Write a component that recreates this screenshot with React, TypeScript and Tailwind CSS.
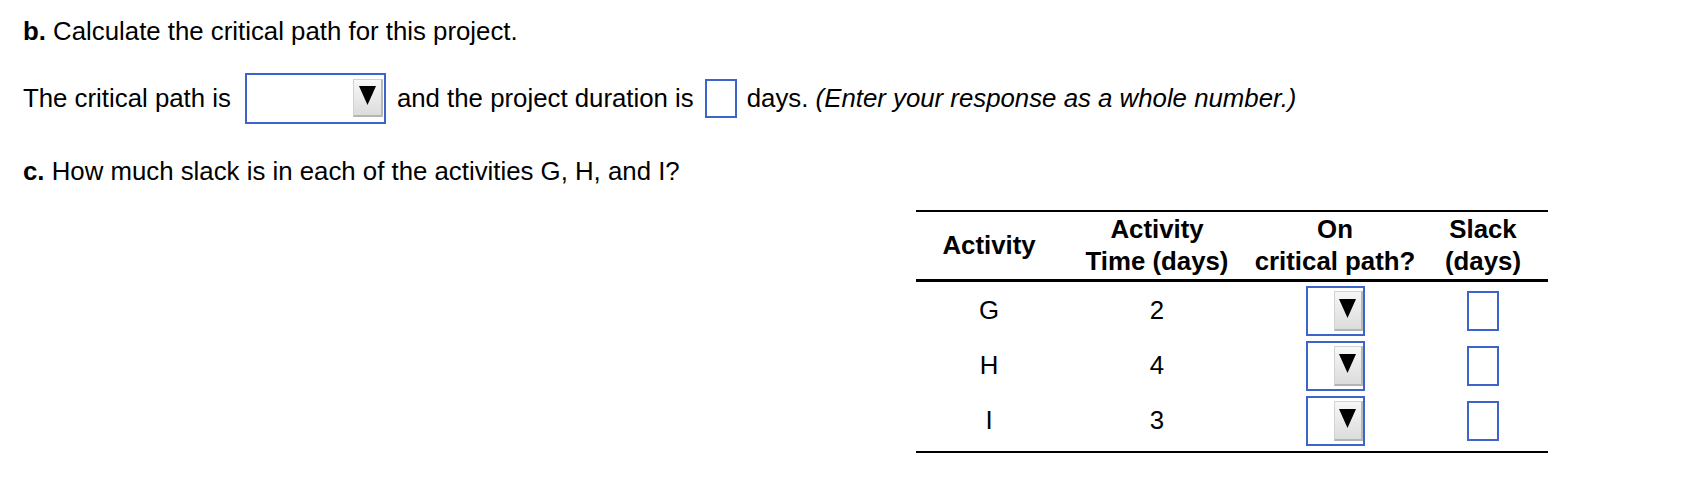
import React from 'react';

const BLUE = 'border-[#3d64c8]';

const Arrow: React.FC<{ className?: string }> = ({ className }) => (
  <div
    className={`flex items-center justify-center bg-gradient-to-b from-[#f7f7f7] to-[#dcdcdc] border border-[#d2d2d2] border-r-2 border-b-2 border-r-[#b9b9b9] border-b-[#b4b4b4] ${className ?? ''}`}
  >
    <svg width="17" height="19" viewBox="0 0 17 19" className="mb-[4px]">
      <polygon points="0,0 17,0 8.5,19" fill="#000" />
    </svg>
  </div>
);

const Blank: React.FC<{ className?: string }> = ({ className }) => (
  <div className={`border-2 ${BLUE} bg-white ${className ?? ''}`} />
);

const rows = [
  { act: 'G', time: 2 },
  { act: 'H', time: 4 },
  { act: 'I', time: 3 },
];

const cols = 'grid grid-cols-[146px_190px_166px_130px]';

export default function App() {
  return (
    <div className="w-[1686px] h-[490px] bg-white text-black font-['Liberation_Sans',Arial,sans-serif] text-[25.8px] pl-[23px] pt-[16px]">
      <p className="leading-[1.2]">
        <b>b.</b> Calculate the critical path for this project.
      </p>

      <div className="flex items-center h-[51px] mt-[26px] leading-[1.2] whitespace-nowrap">
        <span>The critical path is</span>
        <div className={`ml-[14px] w-[141px] h-[51px] border-2 ${BLUE} flex items-center justify-end pr-[1px]`}>
          <Arrow className="w-[30px] h-[38px]" />
        </div>
        <span className="ml-[11px]">and the project duration is</span>
        <Blank className="ml-[11px] w-[32px] h-[39px]" />
        <span className="ml-[10px]">
          days. <i>(Enter your response as a whole number.)</i>
        </span>
      </div>

      <p className="leading-[1.2] mt-[32px]">
        <b>c.</b> How much slack is in each of the activities G, H, and I?
      </p>

      <div className="ml-[893px] mt-[23px] w-[632px]">
        <div className={`${cols} h-[72px] border-t-2 border-b-[3px] border-black items-center font-bold leading-[32px] text-center whitespace-nowrap`}>
          <div>Activity</div>
          <div>
            Activity
            <br />
            Time (days)
          </div>
          <div>
            On
            <br />
            critical path?
          </div>
          <div>
            Slack
            <br />
            (days)
          </div>
        </div>
        <div className="flex flex-col gap-[5px] pt-[4px] pb-[5px] border-b-2 border-black">
          {rows.map((r) => (
            <div key={r.act} className={`${cols} h-[50px] items-center text-center leading-[1.2]`}>
              <div>{r.act}</div>
              <div>{r.time}</div>
              <div className="flex justify-center">
                <div className={`w-[59px] h-[50px] border-2 ${BLUE} flex items-center justify-end`}>
                  <Arrow className="w-[29px] h-[40px]" />
                </div>
              </div>
              <div className="flex justify-center">
                <Blank className="w-[32px] h-[40px]" />
              </div>
            </div>
          ))}
        </div>
      </div>
    </div>
  );
}
